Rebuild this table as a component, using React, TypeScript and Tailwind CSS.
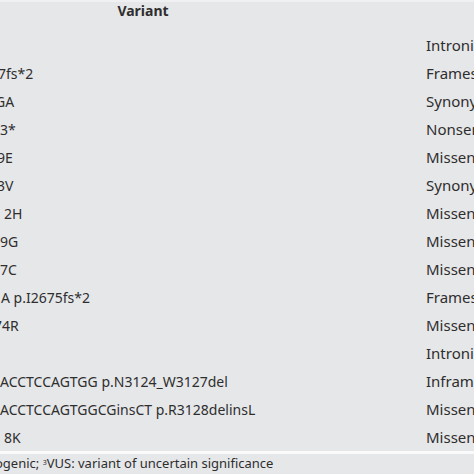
import React from "react";

const rows: { left: string; off: number; right: string }[] = [
  { left: "", off: 0, right: "Intronic" },
  { left: "7fs*2", off: -2, right: "Frameshift" },
  { left: "GA", off: -5, right: "Synonymous" },
  { left: "3*", off: 0, right: "Nonsense" },
  { left: "9E", off: -3, right: "Missense" },
  { left: "3V", off: -3, right: "Synonymous" },
  { left: "2H", off: 4, right: "Missense" },
  { left: "9G", off: 0, right: "Missense" },
  { left: "7C", off: 0, right: "Missense" },
  { left: "A p.I2675fs*2", off: 1, right: "Frameshift" },
  { left: "74R", off: -6, right: "Missense" },
  { left: "", off: 0, right: "Intronic" },
  { left: "ACCTCCAGTGG p.N3124_W3127del", off: 0, right: "Inframe" },
  { left: "ACCTCCAGTGGCGinsCT p.R3128delinsL", off: 0, right: "Missense" },
  { left: "8K", off: 4, right: "Missense" },
];

export default function App() {
  return (
    <div
      className="w-[474px] h-[474px] overflow-hidden bg-[#e6e7e9] text-[#2e2e2e] flex flex-col"
      style={{ fontFamily: '"Noto Sans", "Open Sans", sans-serif' }}
    >
      <div className="h-[2px] bg-[#eff0f1] shrink-0" />
      <div className="h-[29px] shrink-0 flex">
        <div className="w-[426px] flex justify-center pr-[140px]">
          <span className="font-bold text-[14px] leading-[18px]">Variant</span>
        </div>
      </div>
      {rows.map((r, i) => (
        <div key={i} className="h-[28px] shrink-0 flex items-center whitespace-nowrap">
          <div className="w-[426px] overflow-hidden text-[14px]">
            <span className="inline-block" style={{ marginLeft: r.off }}>
              {r.left}
            </span>
          </div>
          <div className="flex-1 overflow-hidden text-[15px]">{r.right}</div>
        </div>
      ))}
      <div className="h-[3px] bg-[#fafafa] shrink-0" />
      <div className="flex-1 flex items-center text-[13px] whitespace-nowrap overflow-hidden">
        <span className="inline-block ml-[-5px]">
          ogenic; <sup className="text-[7px]">3</sup>VUS: variant of uncertain significance
        </span>
      </div>
    </div>
  );
}
